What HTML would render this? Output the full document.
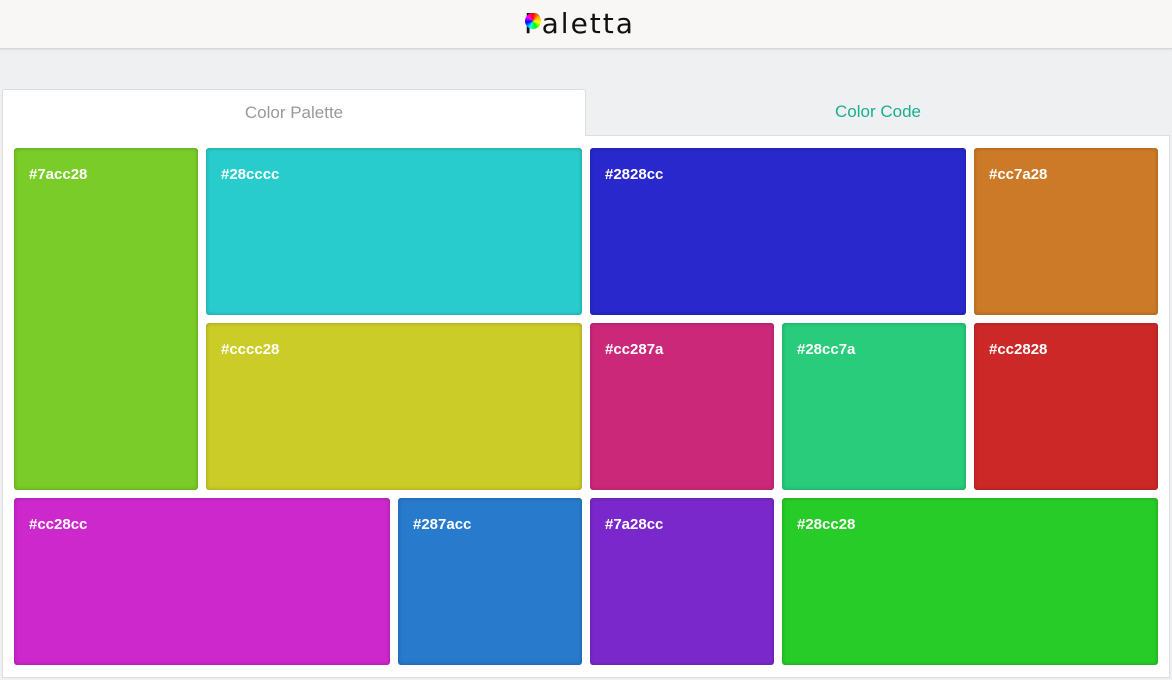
<!DOCTYPE html>
<html><head><meta charset="utf-8"><style>
*{margin:0;padding:0;box-sizing:border-box}
body{width:1172px;height:680px;background:#eff0f2;font-family:"Liberation Sans",sans-serif;position:relative;overflow:hidden}
.hdr{position:absolute;left:0;top:0;width:1172px;height:49px;background:#f8f7f6;border-bottom:1px solid #d6d6d6;box-shadow:0 1px 2px rgba(0,0,0,.08)}
.logo{position:absolute;left:522px;top:7px;font-size:28px;letter-spacing:2px;color:#111;font-family:"DejaVu Sans",sans-serif}
.tab{position:absolute;top:89px;height:47px;font-size:17px;text-align:center;line-height:46px}
.t1{left:2px;width:584px;background:#fff;border:1px solid #ddd;border-bottom:none;border-radius:3px 3px 0 0;color:#999;z-index:2}
.t2{left:586px;width:584px;color:#1aaf8f}
.panel{position:absolute;left:2px;top:135px;width:1168px;height:543px;background:#fff;border:1px solid #ddd}
.c{position:absolute;border-radius:3px;color:#fff;font-weight:bold;font-size:15px;padding:18px 0 0 15px;box-shadow:inset 0 0 4px rgba(0,0,0,.25)}
</style></head><body>
<div class="hdr"><div class="logo"><span style="display:inline-block;width:16px;height:16px;border-radius:50%;background:conic-gradient(red,orange,yellow,lime,cyan,blue,magenta,red);vertical-align:4px;margin-right:-14px;position:relative;left:3px"></span>Paletta</div></div>
<div class="tab t1">Color Palette</div>
<div class="tab t2">Color Code</div>
<div class="panel"></div>
<div class="c" style="left:14px;top:148px;width:184px;height:342px;background:#7acc28">#7acc28</div>
<div class="c" style="left:206px;top:148px;width:376px;height:167px;background:#28cccc">#28cccc</div>
<div class="c" style="left:590px;top:148px;width:376px;height:167px;background:#2828cc">#2828cc</div>
<div class="c" style="left:974px;top:148px;width:184px;height:167px;background:#cc7a28">#cc7a28</div>
<div class="c" style="left:206px;top:323px;width:376px;height:167px;background:#cccc28">#cccc28</div>
<div class="c" style="left:590px;top:323px;width:184px;height:167px;background:#cc287a">#cc287a</div>
<div class="c" style="left:782px;top:323px;width:184px;height:167px;background:#28cc7a">#28cc7a</div>
<div class="c" style="left:974px;top:323px;width:184px;height:167px;background:#cc2828">#cc2828</div>
<div class="c" style="left:14px;top:498px;width:376px;height:167px;background:#cc28cc">#cc28cc</div>
<div class="c" style="left:398px;top:498px;width:184px;height:167px;background:#287acc">#287acc</div>
<div class="c" style="left:590px;top:498px;width:184px;height:167px;background:#7a28cc">#7a28cc</div>
<div class="c" style="left:782px;top:498px;width:376px;height:167px;background:#28cc28">#28cc28</div>
</body></html>
